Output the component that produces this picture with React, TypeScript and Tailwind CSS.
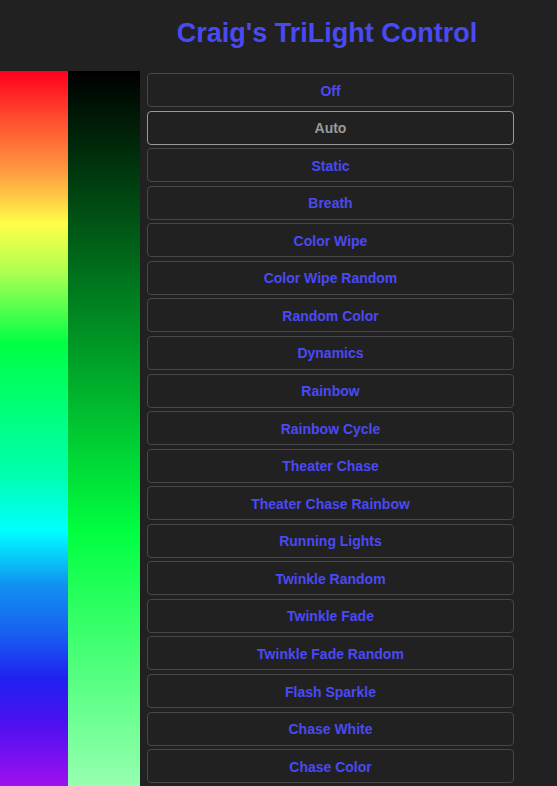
import React from "react";

const modes = [
  "Off",
  "Auto",
  "Static",
  "Breath",
  "Color Wipe",
  "Color Wipe Random",
  "Random Color",
  "Dynamics",
  "Rainbow",
  "Rainbow Cycle",
  "Theater Chase",
  "Theater Chase Rainbow",
  "Running Lights",
  "Twinkle Random",
  "Twinkle Fade",
  "Twinkle Fade Random",
  "Flash Sparkle",
  "Chase White",
  "Chase Color",
];

export default function App() {
  return (
    <div className="min-h-[786px] w-full bg-[#212121] font-['Liberation_Sans',Arial,sans-serif] overflow-hidden">
      <div className="flex h-[71px]">
        <div className="w-[147px] shrink-0" />
        <div className="flex w-[367px] items-center justify-center pb-[4px] pr-[7px]">
          <h1 className="text-[27px] font-bold text-[#4a4af4] leading-none">Craig's TriLight Control</h1>
        </div>
      </div>
      <div className="flex">
        <div className="h-[715px] w-[68px] shrink-0 bg-[linear-gradient(to_bottom,#ff0022_0px,#ff1020_10px,#ff5030_50px,#ff9a40_100px,#ffcc44_127px,#ffff48_153px,#b0ff50_200px,#60ff50_233px,#00ff44_273px,#00ffb0_405px,#00ffff_460px,#1090f0_515px,#1860f0_562px,#2020f0_608px,#5010f0_655px,#a010f0_715px)]" />
        <div className="h-[715px] w-[72px] shrink-0 bg-[linear-gradient(to_bottom,#000000_0px,#00ff40_460px,#ffffff_893px)]" />
        <div className="ml-[7px] mt-[2px] flex w-[367px] flex-col gap-[3.57px]">
          {modes.map((m) => {
            const active = m === "Auto";
            return (
              <button
                key={m}
                className={
                  active
                    ? "flex h-[34px] items-center justify-center rounded-[4px] border border-[#9a9a9a] bg-[#212121] pt-[2px] text-[14px] font-bold text-[#9a9a9a]"
                    : "flex h-[34px] items-center justify-center rounded-[4px] border border-[#474747] bg-[#212121] pt-[2px] text-[14px] font-bold text-[#4a4af4]"
                }
              >
                {m}
              </button>
            );
          })}
        </div>
      </div>
    </div>
  );
}
